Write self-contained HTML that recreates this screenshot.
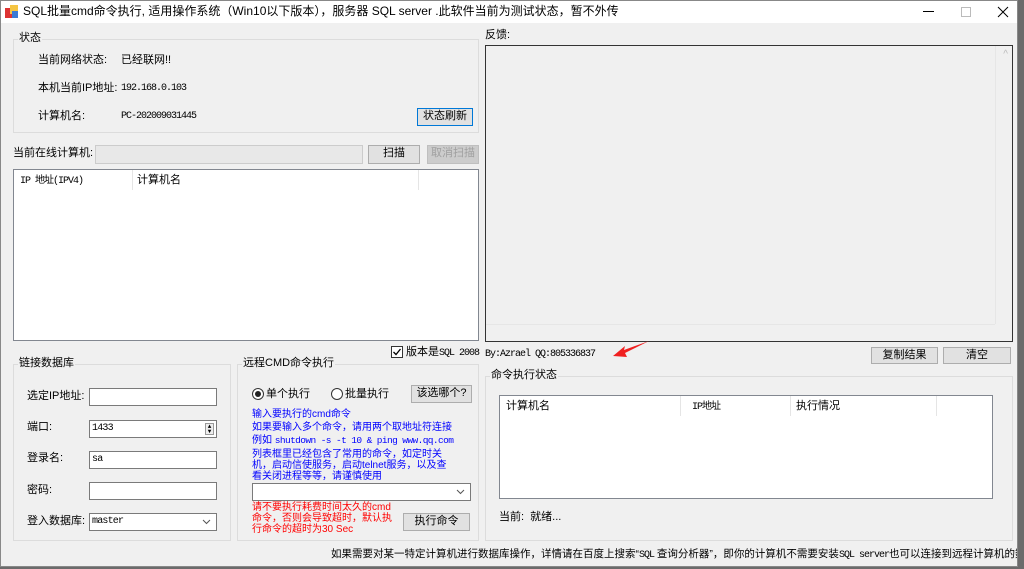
<!DOCTYPE html>
<html><head><meta charset="utf-8"><style>
*{margin:0;padding:0;box-sizing:border-box}
body{width:1024px;height:569px;overflow:hidden;background:#6b6b6b;font-family:"Liberation Sans","Noto Sans CJK SC",sans-serif;font-size:11px;line-height:13px;color:#000;position:relative}
.win{position:absolute;left:0;top:0;width:1018px;height:567px;background:#f0f0f0;border:1px solid #888;overflow:hidden}
.a{position:absolute;white-space:nowrap}
.tb{position:absolute;left:0;top:0;width:1016px;height:22px;background:#fff}
.grp{position:absolute;border:1px solid #dcdcdc}
.lg{position:absolute;background:#f0f0f0;padding:0 1px;top:-8px;left:4px}
.btn{position:absolute;background:#e1e1e1;border:1px solid #adadad;text-align:center;line-height:15px}
.in{position:absolute;background:#fff;border:1px solid #7a7a7a;font-family:"Liberation Mono","Noto Sans CJK SC",monospace;font-size:10px;letter-spacing:-0.8px;padding-left:2px;line-height:15px}
.list{position:absolute;background:#fff;border:1px solid #828790}
.mono{font-family:"Liberation Mono","Noto Sans CJK SC",monospace;font-size:10px;letter-spacing:-1px}
.blue{color:#0000ff}.red{color:#ff0000}
.col{position:absolute;top:0;height:20px;border-left:1px solid #e5e5e5}
</style></head><body>
<div class="win">
<div class="tb">
 <svg class="a" style="left:4px;top:4px" width="14" height="14"><rect x="0" y="3" width="8" height="10" fill="#d33"/><rect x="5" y="0" width="8" height="9" fill="#f5c542"/><rect x="7" y="6" width="6" height="7" fill="#3a7bd5"/></svg>
 <div class="a" style="left:22px;top:4px;font-size:12px">SQL批量cmd命令执行, 适用操作系统（Win10以下版本），服务器 SQL server .此软件当前为测试状态，暂不外传</div>
 <div class="a" style="left:922px;top:10px;width:11px;height:1px;background:#000"></div>
 <div class="a" style="left:960px;top:6px;width:10px;height:10px;border:1px solid #bbb"></div>
 <svg class="a" style="left:996px;top:5px" width="12" height="12"><path d="M1 1L11 11M11 1L1 11" stroke="#000" stroke-width="1"/></svg>
</div>

<div class="grp" style="left:12px;top:38px;width:466px;height:94px"><span class="lg">状态</span></div>
<div class="a" style="left:37px;top:53px">当前网络状态:</div>
<div class="a" style="left:120px;top:53px">已经联网!!</div>
<div class="a" style="left:37px;top:81px">本机当前IP地址:</div>
<div class="a mono" style="left:120px;top:81px">192.168.0.103</div>
<div class="a" style="left:37px;top:109px">计算机名:</div>
<div class="a mono" style="left:120px;top:109px">PC-202009031445</div>
<div class="btn" style="left:416px;top:107px;width:56px;height:18px;border:1px solid #0078d7">状态刷新</div>

<div class="a" style="left:12px;top:146px">当前在线计算机:</div>
<div class="a" style="left:94px;top:144px;width:268px;height:19px;background:#e8e8e8;border:1px solid #ccc"></div>
<div class="btn" style="left:367px;top:144px;width:52px;height:19px">扫描</div>
<div class="btn" style="left:426px;top:144px;width:52px;height:19px;background:#ccc;border-color:#bfbfbf;color:#a0a0a0">取消扫描</div>

<div class="list" style="left:12px;top:168px;width:466px;height:172px">
 <div class="a mono" style="left:6px;top:5px">IP 地址(IPV4)</div>
 <div class="col" style="left:118px"></div>
 <div class="a" style="left:123px;top:4px">计算机名</div>
 <div class="col" style="left:404px"></div>
</div>

<div class="a" style="left:390px;top:345px;width:12px;height:12px;border:1px solid #333;background:#fff"><svg width="10" height="10" style="position:absolute;left:0;top:0"><path d="M1.5 5L4 7.5L8.5 2" stroke="#000" fill="none" stroke-width="1.3"/></svg></div>
<div class="a" style="left:405px;top:345px">版本是<span class="mono">SQL 2008</span></div>

<div class="grp" style="left:12px;top:363px;width:218px;height:177px"><span class="lg">链接数据库</span></div>
<div class="a" style="left:26px;top:389px">选定IP地址:</div>
<div class="in" style="left:88px;top:387px;width:128px;height:18px"></div>
<div class="a" style="left:26px;top:420px">端口:</div>
<div class="in" style="left:88px;top:419px;width:128px;height:18px">1433<div style="position:absolute;right:2px;top:2px;width:9px;height:12px;border:1px solid #999;background:#eee;font-size:6px;line-height:5px;text-align:center;letter-spacing:0">▲<br>▼</div></div>
<div class="a" style="left:26px;top:451px">登录名:</div>
<div class="in" style="left:88px;top:450px;width:128px;height:18px">sa</div>
<div class="a" style="left:26px;top:483px">密码:</div>
<div class="in" style="left:88px;top:481px;width:128px;height:18px"></div>
<div class="a" style="left:26px;top:514px">登入数据库:</div>
<div class="in" style="left:88px;top:512px;width:128px;height:18px">master<svg style="position:absolute;right:5px;top:5px" width="9" height="6"><path d="M1 1L4.5 4.5L8 1" stroke="#555" fill="none"/></svg></div>

<div class="grp" style="left:236px;top:363px;width:242px;height:177px"><span class="lg">远程CMD命令执行</span></div>
<div class="a" style="left:251px;top:387px;width:12px;height:12px;border:1px solid #333;border-radius:50%;background:#fff"><div style="position:absolute;left:2px;top:2px;width:6px;height:6px;border-radius:50%;background:#222"></div></div>
<div class="a" style="left:265px;top:387px">单个执行</div>
<div class="a" style="left:330px;top:387px;width:12px;height:12px;border:1px solid #333;border-radius:50%;background:#fff"></div>
<div class="a" style="left:344px;top:387px">批量执行</div>
<div class="btn" style="left:410px;top:384px;width:61px;height:18px">该选哪个?</div>
<div class="a blue" style="left:251px;top:407px;font-size:10px;line-height:13px">输入要执行的cmd命令<br>如果要输入多个命令，请用两个取地址符连接<br>例如 <span class="mono" style="font-size:9.5px;letter-spacing:-0.6px">shutdown -s -t 10 &amp; ping www.qq.com</span></div>
<div class="a blue" style="left:251px;top:448px;font-size:10px;line-height:11px">列表框里已经包含了常用的命令，如定时关<br>机，启动信使服务，启动telnet服务，以及查<br>看关闭进程等等，请谨慎使用</div>
<div class="in" style="left:251px;top:482px;width:219px;height:18px"><svg style="position:absolute;right:5px;top:5px" width="9" height="6"><path d="M1 1L4.5 4.5L8 1" stroke="#555" fill="none"/></svg></div>
<div class="a red" style="left:251px;top:501px;font-size:10px;line-height:11px">请不要执行耗费时间太久的cmd<br>命令，否则会导致超时，默认执<br>行命令的超时为30 Sec</div>
<div class="btn" style="left:402px;top:512px;width:67px;height:18px">执行命令</div>

<div class="a" style="left:484px;top:28px">反馈:</div>
<div class="a" style="left:484px;top:44px;width:528px;height:297px;border:1px solid #333;background:#f0f0f0">
 <div class="a" style="right:0;top:0;width:17px;height:278px;border-left:1px solid #e6e6e6"></div>
 <div class="a" style="left:0;bottom:0;width:509px;height:17px;border-top:1px solid #e6e6e6"></div>
 <div class="a" style="right:4px;top:2px;color:#bbb;font-size:10px">^</div>
</div>
<div class="a mono" style="left:484px;top:347px">By:Azrael QQ:805336837</div>
<svg class="a" style="left:608px;top:338px" width="46" height="22"><path d="M4 17L16 7L15 11L40 2L16 14L18 18Z" fill="#f02020"/></svg>
<div class="btn" style="left:870px;top:346px;width:67px;height:17px">复制结果</div>
<div class="btn" style="left:942px;top:346px;width:68px;height:17px">清空</div>

<div class="grp" style="left:484px;top:375px;width:528px;height:165px"><span class="lg">命令执行状态</span></div>
<div class="list" style="left:498px;top:394px;width:494px;height:104px">
 <div class="a" style="left:6px;top:4px">计算机名</div>
 <div class="col" style="left:180px"></div>
 <div class="a mono" style="left:192px;top:5px">IP地址</div>
 <div class="col" style="left:290px"></div>
 <div class="a" style="left:296px;top:4px">执行情况</div>
 <div class="col" style="left:436px"></div>
</div>
<div class="a" style="left:498px;top:510px">当前: &nbsp;就绪...</div>

<div class="a" style="left:330px;top:547px;font-size:10.5px">如果需要对某一特定计算机进行数据库操作，详情请在百度上搜索“<span class="mono">SQL</span> 查询分析器”，即你的计算机不需要安装<span class="mono">SQL server</span>也可以连接到远程计算机的数据库</div>
</div>
</body></html>
